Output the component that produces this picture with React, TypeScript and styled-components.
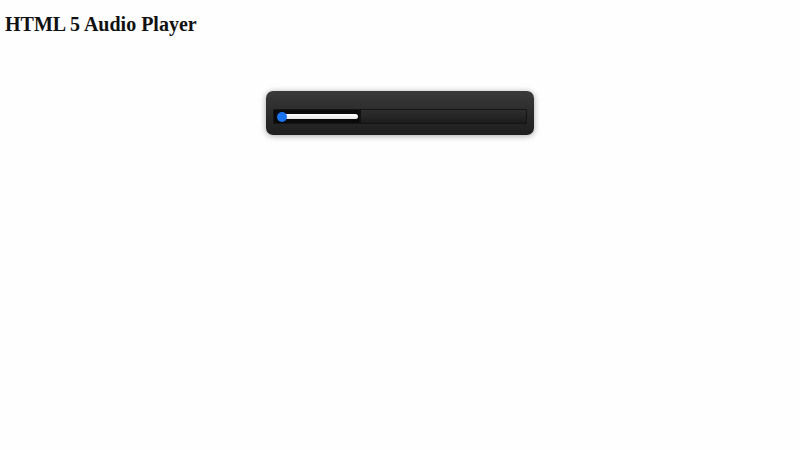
import { createGlobalStyle } from "styled-components";
import styled from "styled-components";

const GlobalStyle = createGlobalStyle`
  body {
    margin: 0;
    background: #fefefe;
    font-family: "Liberation Serif", "Times New Roman", serif;
  }
`;

const Page = styled.div`
  padding: 12px 5px;
`;

const Title = styled.h1`
  margin: 0;
  font-size: 20px;
  font-weight: 700;
  color: #111;
  line-height: 24px;
`;

const Player = styled.div`
  width: 268px;
  height: 44px;
  margin: 55px auto 0;
  box-sizing: border-box;
  padding: 18px 7px 0;
  border-radius: 7px;
  background: linear-gradient(to bottom, #3a3a3a 0%, #2b2b2b 50%, #1e1e1e 100%);
  box-shadow: 0 1px 6px rgba(0, 0, 0, 0.35);
`;

const Bar = styled.div`
  display: flex;
  height: 15px;
  box-sizing: border-box;
  border: 1px solid #141414;
  border-radius: 1px;
  background: linear-gradient(to bottom, #2e2e2e 0%, #262626 50%, #1b1b1b 100%);
`;

const VolumeCell = styled.div`
  width: 87px;
  box-sizing: border-box;
  display: flex;
  align-items: center;
  position: relative;
  background: #0a0a0a;
  border-right: 2px solid #111;
  padding: 0 1px 0 8px;
`;

const Track = styled.div`
  height: 5px;
  flex: 1;
  border-radius: 3px;
  background: linear-gradient(to bottom, #ffffff, #e6e6e6);
`;

const Thumb = styled.div`
  position: absolute;
  left: 3px;
  top: 50%;
  width: 10px;
  height: 10px;
  margin-top: -5px;
  border-radius: 50%;
  background: #1a74f0;
`;

const Progress = styled.div`
  flex: 1;
`;

export default function App() {
  return (
    <>
      <GlobalStyle />
      <Page>
        <Title>HTML 5 Audio Player</Title>
        <Player>
          <Bar>
            <VolumeCell>
              <Track />
              <Thumb />
            </VolumeCell>
            <Progress />
          </Bar>
        </Player>
      </Page>
    </>
  );
}
